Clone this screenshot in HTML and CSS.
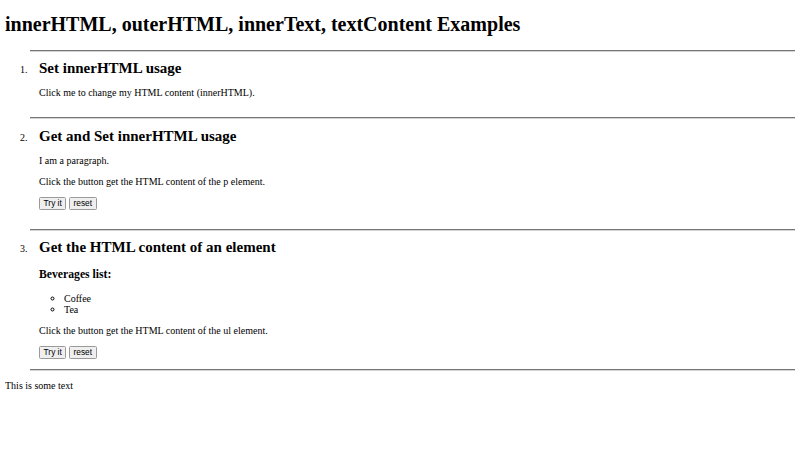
FILE: index.html
```html
<!DOCTYPE html>
<html>
<head>
<meta charset="utf-8">
<title>innerHTML, outerHTML, innerText, textContent Examples</title>
<link rel="stylesheet" href="styles.css">
</head>
<body>
<h1 class="title">innerHTML, outerHTML, innerText, textContent Examples</h1>
<ol class="examples">
  <li class="example">
    <hr class="rule">
    <div class="example-body">
      <h2 class="example-title">Set innerHTML usage</h2>
      <p class="text">Click me to change my HTML content (innerHTML).</p>
    </div>
  </li>
  <li class="example">
    <hr class="rule">
    <div class="example-body">
      <h2 class="example-title">Get and Set innerHTML usage</h2>
      <p class="text">I am a paragraph.</p>
      <p class="text">Click the button get the HTML content of the p element.</p>
      <div class="actions"><button class="btn">Try it</button> <button class="btn">reset</button></div>
    </div>
  </li>
  <li class="example last">
    <hr class="rule">
    <div class="example-body">
      <h2 class="example-title">Get the HTML content of an element</h2>
      <h3 class="sub">Beverages list:</h3>
      <ul class="bev">
        <li>Coffee</li>
        <li>Tea</li>
      </ul>
      <p class="text">Click the button get the HTML content of the ul element.</p>
      <div class="actions"><button class="btn">Try it</button> <button class="btn">reset</button></div>
    </div>
    <hr class="rule">
  </li>
</ol>
<div class="some">This is some text</div>
</body>
</html>
```
FILE: styles.css
```css
html { background: #fff; }
body {
  margin: 0 5px 5px;
  font-family: "Liberation Serif", "Times New Roman", serif;
  font-size: 10px;
  color: #000;
}
.title {
  font-size: 20px;
  font-weight: bold;
  margin: 13.4px 0;
}
.examples {
  margin: 13.4px 0 0;
  padding-left: 25px;
}
.rule {
  margin: 0;
  height: 0;
  border: 0;
  border-top: 1px solid #767676;
  border-bottom: 1px solid #d4d4d4;
}
.example-body {
  margin-left: 9px;
  padding-bottom: 9px;
}
.example.last .example-body { padding-bottom: 0; }
.example-title {
  font-size: 15px;
  font-weight: bold;
  margin: 8.5px 0 10px;
}
.text { margin: 10px 0; }
.sub {
  font-size: 11.7px;
  font-weight: bold;
  margin: 11.7px 0;
}
.bev {
  margin: 10px 0;
  padding-left: 25px;
  list-style: circle;
}
.actions { margin: 10px 0; }
.btn {
  font-family: "Liberation Sans", Arial, sans-serif;
  font-size: 8.333px;
  padding: 0.6px 3.6px;
  margin: 0;
  border: 1px solid #9a9a9a;
  border-radius: 1.5px;
  background: #efefef;
  color: #000;
}
.some { margin-top: 8.5px; }
```
